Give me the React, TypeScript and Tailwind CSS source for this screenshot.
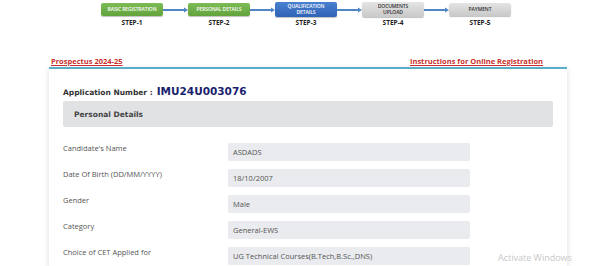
import React from 'react';

const steps = [
  { title: ['BASIC REGISTRATION'], label: 'STEP-1', tone: 'green' },
  { title: ['PERSONAL DETAILS'], label: 'STEP-2', tone: 'green' },
  { title: ['QUALIFICATION', 'DETAILS'], label: 'STEP-3', tone: 'blue' },
  { title: ['DOCUMENTS', 'UPLOAD'], label: 'STEP-4', tone: 'gray' },
  { title: ['PAYMENT'], label: 'STEP-5', tone: 'gray' },
];

const fields = [
  { label: "Candidate's Name", value: 'ASDADS' },
  { label: 'Date Of Birth (DD/MM/YYYY)', value: '18/10/2007' },
  { label: 'Gender', value: 'Male' },
  { label: 'Category', value: 'General-EWS' },
  { label: 'Choice of CET Applied for', value: 'UG Technical Courses(B.Tech,B.Sc.,DNS)' },
];

function Connector() {
  return (
    <svg width="25" height="6" className="mt-[7px] shrink-0">
      <line x1="0" y1="3" x2="22" y2="3" stroke="#4f86c6" strokeWidth="2" />
      <polygon points="21,0.5 25,3 21,5.5" fill="#4f86c6" />
    </svg>
  );
}

function Step({ title, label, tone }: { title: string[]; label: string; tone: string }) {
  const two = title.length > 1;
  const box =
    tone === 'green'
      ? 'bg-gradient-to-b from-[#7dbb55] to-[#62a33c] text-white'
      : tone === 'blue'
      ? 'bg-gradient-to-b from-[#4a80d0] to-[#2f63b5] text-white'
      : 'bg-gradient-to-b from-[#e4e4e4] to-[#c9c9c9] text-[#333]';
  return (
    <div className="flex w-[62px] shrink-0 flex-col items-center">
      <div
        className={`flex w-full flex-col items-center justify-center rounded-[2px] text-[5px] font-semibold leading-[5.5px] tracking-[-0.1px] shadow-[0_1px_1px_rgba(0,0,0,0.25)] ${box} ${
          two ? 'mt-[2px] h-[15px]' : 'mt-[3px] h-[13px]'
        }`}
      >
        {title.map((t) => (
          <span key={t}>{t}</span>
        ))}
      </div>
      <div className={`text-[6.5px] font-bold leading-none text-[#222] ${two ? 'mt-[3px]' : 'mt-[4px]'}`}>
        {label}
      </div>
    </div>
  );
}

export default function App() {
  return (
    <div className="relative h-[266px] w-[600px] overflow-hidden bg-white font-['Open_Sans',sans-serif]">
      <div className="flex items-start pl-[101px]">
        {steps.map((s, i) => (
          <React.Fragment key={s.label}>
            {i > 0 && <Connector />}
            <Step {...s} />
          </React.Fragment>
        ))}
      </div>

      <div className="ml-[49px] mt-[29px] w-[518px]">
        <div className="flex items-end justify-between border-b-[2px] border-[#5fb6d3] px-[2px] pb-[1px]">
          <a className="text-[7.5px] font-bold leading-[10px] text-[#c9302c] underline">Prospectus 2024-25</a>
          <a className="mr-[22px] text-[7.5px] font-bold leading-[10px] text-[#c9302c] underline">
            Instructions for Online Registration
          </a>
        </div>

        <div className="h-[200px] bg-white px-[14px] pt-[15px] shadow-[0_0_6px_rgba(0,0,0,0.14)]">
          <div className="flex items-baseline gap-[4px] font-['DejaVu_Sans',sans-serif] font-bold">
            <span className="text-[7.5px] text-[#333]">Application Number :</span>
            <span className="text-[10.5px] text-[#1a1f6e]">IMU24U003076</span>
          </div>
          <div className="mt-[2px] flex h-[26px] items-center rounded-[2px] bg-[#e1e2e4] px-[11px] font-['DejaVu_Sans',sans-serif] text-[7.5px] font-bold text-[#444]">
            Personal Details
          </div>

          <div className="mt-[16px] flex flex-col gap-[8px]">
            {fields.map((f) => (
              <div key={f.label} className="flex items-start">
                <div className="w-[165px] text-[7.5px] leading-[10px] text-[#555]">{f.label}</div>
                <div className="flex h-[18px] w-[242px] items-center rounded-[2px] bg-[#e9ebee] px-[5px] text-[7.5px] text-[#555]">
                  {f.value}
                </div>
              </div>
            ))}
          </div>
        </div>
      </div>

      <div className="absolute left-[498px] top-[252px] text-[9px] leading-[12px] text-[#c8c8c8]">Activate Windows</div>
    </div>
  );
}
